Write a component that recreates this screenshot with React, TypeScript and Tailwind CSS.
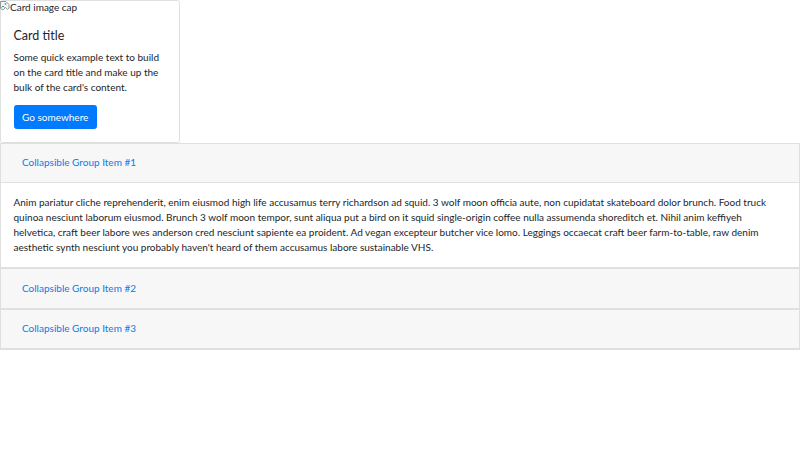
import React from "react";

const F = { fontFamily: "Lato, 'Noto Sans', sans-serif" } as React.CSSProperties;

function BrokenImg() {
  return (
    <svg width="10" height="12" viewBox="0 0 10 12" className="shrink-0 mt-[1px]">
      <path d="M0.5 0.5 H6 L9 3.5 V7 L7.5 8.5 L5.5 6.5 L3 9 L0.5 7.5 Z" fill="#f5f5f5" stroke="#8f98a3" strokeWidth="1" />
      <path d="M1.5 6.5 L3 5 L4.5 6.5" fill="none" stroke="#3ea14a" strokeWidth="1" />
      <circle cx="5.5" cy="3" r="0.9" fill="#5f9bd5" />
    </svg>
  );
}

function Header({ label }: { label: string }) {
  return (
    <div className="bg-[#f7f7f7] border-b border-[#e0e0e0] px-[12.5px] py-[7.5px]">
      <button className="block text-[#0a7bea] text-[10px] leading-[15px] px-[7.5px] py-[3.25px] border border-transparent">
        {label}
      </button>
    </div>
  );
}

const lines = [
  "Anim pariatur cliche reprehenderit, enim eiusmod high life accusamus terry richardson ad squid. 3 wolf moon officia aute, non cupidatat skateboard dolor brunch. Food truck",
  "quinoa nesciunt laborum eiusmod. Brunch 3 wolf moon tempor, sunt aliqua put a bird on it squid single-origin coffee nulla assumenda shoreditch et. Nihil anim keffiyeh",
  "helvetica, craft beer labore wes anderson cred nesciunt sapiente ea proident. Ad vegan excepteur butcher vice lomo. Leggings occaecat craft beer farm-to-table, raw denim",
  "aesthetic synth nesciunt you probably haven't heard of them accusamus labore sustainable VHS.",
];

export default function App() {
  return (
    <div className="w-[800px] h-[450px] bg-white text-[#212529] text-[10px] leading-[15px]" style={F}>
      <div className="w-[180px] border border-[#dfdfdf] rounded-[2.5px]">
        <div className="flex items-start h-[15px] -ml-px -mt-px">
          <BrokenImg />
          <span className="text-[10px] leading-[15px] text-[#212529]">Card image cap</span>
        </div>
        <div className="p-[12.5px]">
          <div className="text-[12.5px] leading-[15px] mb-[7.5px]">Card title</div>
          <p className="mb-[10px]">Some quick example text to build on the card title and make up the bulk of the card's content.</p>
          <button className="block bg-[#007bff] text-white rounded-[2.5px] px-[7.5px] py-[3.5px] border border-[#007bff] text-[10px] leading-[15px]">
            Go somewhere
          </button>
        </div>
      </div>
      <div className="w-[800px]">
        <div className="border border-[#dfdfdf] border-b-0">
          <Header label="Collapsible Group Item #1" />
          <div className="px-[12.5px] py-[12px] border-b border-[#dfdfdf]">
            {lines.map((l, i) => (
              <div key={i} className="whitespace-nowrap">{l}</div>
            ))}
          </div>
        </div>
        <div className="border border-[#dfdfdf] border-b-0">
          <Header label="Collapsible Group Item #2" />
        </div>
        <div className="border border-[#dfdfdf]">
          <Header label="Collapsible Group Item #3" />
        </div>
      </div>
    </div>
  );
}
